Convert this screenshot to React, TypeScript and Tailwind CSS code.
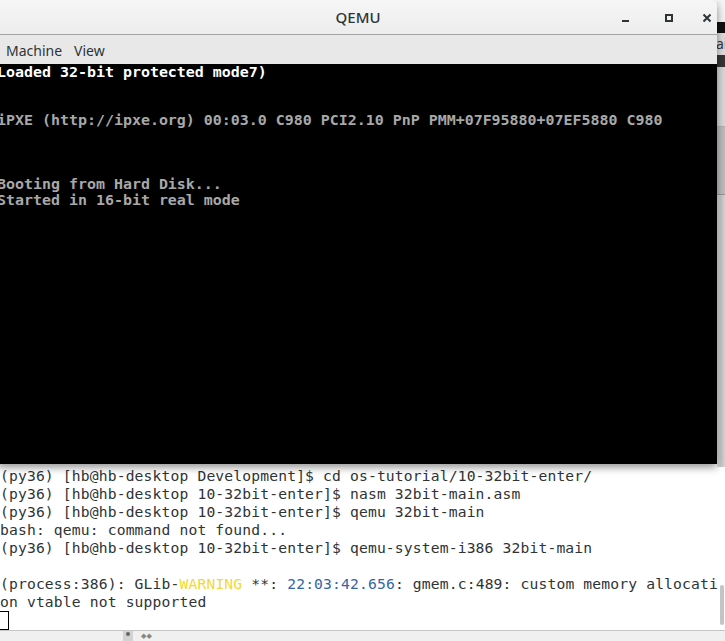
import { Fragment } from 'react'

const vgaRows: { text: string; bright?: boolean }[] = [
  { text: 'Loaded 32-bit protected mode7)', bright: true },
  { text: '' },
  { text: '' },
  { text: 'iPXE (http://ipxe.org) 00:03.0 C980 PCI2.10 PnP PMM+07F95880+07EF5880 C980' },
  { text: '' },
  { text: '' },
  { text: '' },
  { text: 'Booting from Hard Disk...' },
  { text: 'Started in 16-bit real mode' },
]

const shellLines = [
  '(py36) [hb@hb-desktop Development]$ cd os-tutorial/10-32bit-enter/',
  '(py36) [hb@hb-desktop 10-32bit-enter]$ nasm 32bit-main.asm',
  '(py36) [hb@hb-desktop 10-32bit-enter]$ qemu 32bit-main',
  'bash: qemu: command not found...',
  '(py36) [hb@hb-desktop 10-32bit-enter]$ qemu-system-i386 32bit-main',
  '',
]

function TitleButtons() {
  return (
    <div className="absolute right-[5px] top-0 h-[35px] flex items-center text-[#2e3436]">
      {/* minimize */}
      <svg width="10" height="10" viewBox="0 0 10 10">
        <rect x="1" y="7" width="7" height="2" fill="currentColor" />
      </svg>
      {/* maximize */}
      <svg width="10" height="10" viewBox="0 0 10 10" className="ml-[33px]">
        <rect x="2" y="2" width="6" height="6" fill="none" stroke="currentColor" strokeWidth="2" />
      </svg>
      {/* close */}
      <svg width="10" height="10" viewBox="0 0 10 10" className="ml-[28px]">
        <path d="M1.5 1.5 L8.5 8.5 M8.5 1.5 L1.5 8.5" stroke="currentColor" strokeWidth="2" />
      </svg>
    </div>
  )
}

function QemuWindow() {
  return (
    <div className="absolute left-[-3px] top-0 w-[720px] rounded-t-[7px] overflow-hidden shadow-[0_3px_8px_rgba(0,0,0,0.45)] font-['Noto_Sans',sans-serif]">
      <div className="relative h-[35px] bg-gradient-to-b from-[#f6f6f6] to-[#ededed] flex items-center justify-center border-b border-[#a4a4a4]">
        <span className="text-[15px] font-medium text-[#2e3436] ml-[2px]">QEMU</span>
        <TitleButtons />
      </div>
      <div className="h-[29px] bg-[#e8e8e8] flex items-center gap-[12px] pl-[9px] pt-[2px] text-[14px] text-[#2e3436]">
        <span>Machine</span>
        <span>View</span>
      </div>
      <div className="h-[400px] bg-black font-['DejaVu_Sans_Mono',monospace] font-bold text-[14.95px] leading-[16px]">
        {vgaRows.map((row, i) => (
          <div
            key={i}
            className={`h-[16px] whitespace-pre ${row.bright ? 'text-white' : 'text-[#a8a8a8]'}`}
          >
            {row.text}
          </div>
        ))}
      </div>
    </div>
  )
}

function RightStrip() {
  return (
    <div className="w-[8px] flex flex-col overflow-hidden">
      <div className="h-[22px] bg-[#f4f4f4]" />
      <div className="h-[11px] bg-[#111]" />
      <div className="h-[22px] bg-[#dedede] text-[14px] text-[#333] leading-[22px] whitespace-pre overflow-hidden font-['Noto_Sans',sans-serif]">
        <span className="ml-[-1px]">ai</span>
      </div>
      <div className="h-[12px] bg-[#353535]" />
      <div className="h-[60px] bg-[#d8d8d8] border-b border-[#b4b4b4]" />
      <div className="h-[68px] bg-[#bcbcbc] border-b border-[#999]" />
      <div className="flex-1 bg-gradient-to-r from-[#e0e0e0] via-[#c8c8c8] to-[#d4d4d4]" />
    </div>
  )
}

export default function App() {
  return (
    <div className="relative w-[725px] h-[641px] overflow-hidden bg-white">
      <div className="h-full flex flex-col">
        <div className="h-[467px] flex justify-end">
          <RightStrip />
        </div>
        <div className="relative flex-1 bg-white font-['DejaVu_Sans_Mono',monospace] text-[14.67px] tracking-[0.15px] leading-[18px] text-[#2e3436]">
          {shellLines.map((line, i) => (
            <div key={i} className="h-[18px] whitespace-pre overflow-hidden">
              {line}
            </div>
          ))}
          <div className="h-[18px] whitespace-pre overflow-hidden">
            (process:386): GLib-<span className="text-[#f5d835]">WARNING</span> **:{' '}
            <span className="text-[#3465a4]">22:03:42.656</span>: gmem.c:489: custom memory allocati
          </div>
          <div className="h-[18px] whitespace-pre overflow-hidden">on vtable not supported</div>
          <div className="h-[19px] flex">
            <div className="ml-[-1px] w-[10px] h-[19px] border border-black" />
          </div>
          {/* scrollbar */}
          <div className="absolute right-[1px] top-[118px] w-[4px] h-[40px] rounded-full bg-[#c4c4c4]" />
        </div>
        <div className="h-[11px] bg-[#f0f0f0] border-t border-[#c6c6c6] flex items-start">
          <div className="ml-[123px] w-[10px] h-[11px] bg-[#d2d2d2] flex justify-center">
            <div className="mt-[1px] w-[4px] h-[4px] rounded-full bg-[#666]" />
          </div>
          <Fragment>
            <div className="ml-[8px] mt-[2px] text-[7px] leading-[7px] text-[#888] font-['DejaVu_Sans',sans-serif]">◆◆</div>
          </Fragment>
        </div>
      </div>
      <QemuWindow />
    </div>
  )
}
